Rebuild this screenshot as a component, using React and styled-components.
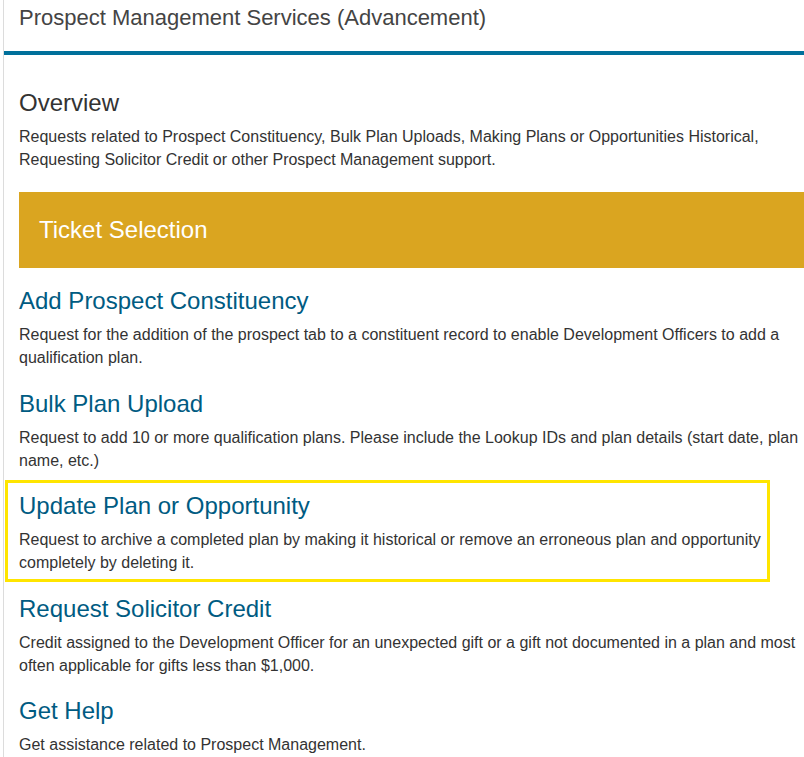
import React from 'react'
import styled, { createGlobalStyle } from 'styled-components'

const GlobalStyle = createGlobalStyle`
body{
  margin:0;
  background:#fff;
  font-family:"Liberation Sans", Arial, sans-serif;
}
`;

const Page = styled.div`
margin-left:3px;
border-left:1px solid #dcdcdc;
min-height:100vh;
overflow:hidden;
`;

const Header = styled.div`
height:51px;
border-bottom:4px solid #00709b;
padding-left:15px;
display:flex;
align-items:flex-start;
`;

const PageTitle = styled.h1`
margin:5px 0 0;
font-size:22px;
line-height:26px;
font-weight:400;
color:#444;
`;

const Content = styled.div`
padding:34px 0 0 15px;
display:flex;
flex-direction:column;
`;

const Heading = styled.h2`
margin:0 0 8px;
font-size:24px;
line-height:28px;
font-weight:400;
color:${p => p.$accent ? '#005b82' : '#333'};
`;

const Desc = styled.p`
margin:0;
font-size:16px;
line-height:23px;
color:#333;
`;

const Banner = styled.div`
margin:21px -40px 19px 0;
height:76px;
background:#daa520;
display:flex;
align-items:center;
padding-left:20px;
`;

const BannerTitle = styled.h2`
margin:0;
font-size:24px;
font-weight:400;
color:#fff;
`;

const List = styled.div`
display:flex;
flex-direction:column;
gap:20.5px;
`;

const Item = styled.div`
position:relative;
&::after{
  content:'';
  display:${p => p.$highlight ? 'block' : 'none'};
  position:absolute;
  left:-14px;
  right:34px;
  top:-12px;
  bottom:-8px;
  border:3px solid #ffe500;
  pointer-events:none;
}
`;

const tickets = [
  {
    title: 'Add Prospect Constituency',
    desc: 'Request for the addition of the prospect tab to a constituent record to enable Development Officers to add a qualification plan.',
  },
  {
    title: 'Bulk Plan Upload',
    desc: 'Request to add 10 or more qualification plans. Please include the Lookup IDs and plan details (start date, plan name, etc.)',
  },
  {
    title: 'Update Plan or Opportunity',
    desc: 'Request to archive a completed plan by making it historical or remove an erroneous plan and opportunity completely by deleting it.',
    highlight: true,
  },
  {
    title: 'Request Solicitor Credit',
    desc: 'Credit assigned to the Development Officer for an unexpected gift or a gift not documented in a plan and most often applicable for gifts less than $1,000.',
  },
  {
    title: 'Get Help',
    desc: 'Get assistance related to Prospect Management.',
  },
];

const App = () => {
  return (
    <>
      <GlobalStyle />
      <Page>
        <Header>
          <PageTitle>Prospect Management Services (Advancement)</PageTitle>
        </Header>
        <Content>
          <Heading>Overview</Heading>
          <Desc>
            Requests related to Prospect Constituency, Bulk Plan Uploads, Making Plans or Opportunities Historical, Requesting Solicitor Credit or other Prospect Management support.
          </Desc>
          <Banner>
            <BannerTitle>Ticket Selection</BannerTitle>
          </Banner>
          <List>
            {tickets.map(t => (
              <Item key={t.title} $highlight={t.highlight}>
                <Heading $accent>{t.title}</Heading>
                <Desc>{t.desc}</Desc>
              </Item>
            ))}
          </List>
        </Content>
      </Page>
    </>
  )
}

export default App
